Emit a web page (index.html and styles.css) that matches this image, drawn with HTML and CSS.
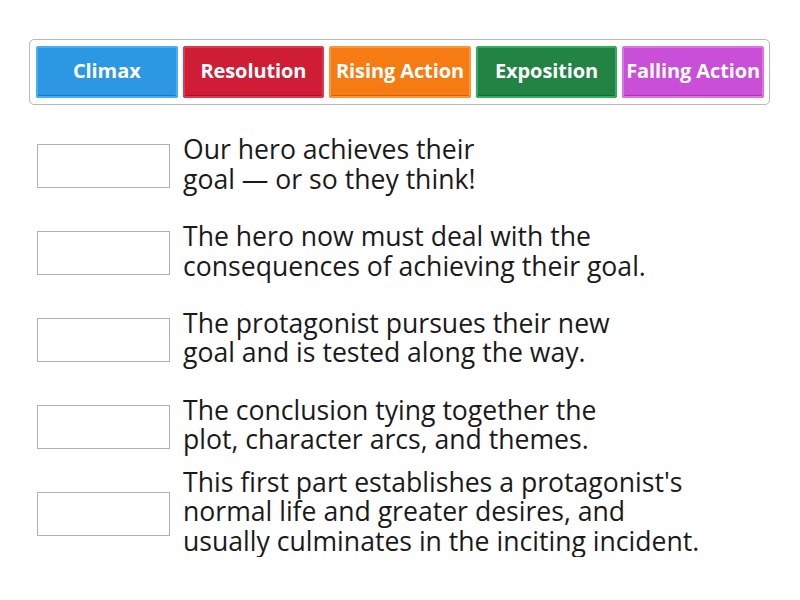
FILE: index.html
```html
<!DOCTYPE html>
<html>
<head>
<meta charset="utf-8">
<link rel="stylesheet" href="styles.css">
</head>
<body>
<div class="page">
  <div class="bank">
    <div class="tile blue">Climax</div>
    <div class="tile red">Resolution</div>
    <div class="tile orange">Rising Action</div>
    <div class="tile green">Exposition</div>
    <div class="tile purple">Falling Action</div>
  </div>
  <div class="rows">
    <div class="row"><div class="slot"></div><div class="text">Our hero achieves their<br>goal — or so they think!</div></div>
    <div class="row"><div class="slot"></div><div class="text">The hero now must deal with the<br>consequences of achieving their goal.</div></div>
    <div class="row"><div class="slot"></div><div class="text">The protagonist pursues their new<br>goal and is tested along the way.</div></div>
    <div class="row"><div class="slot"></div><div class="text">The conclusion tying together the<br>plot, character arcs, and themes.</div></div>
    <div class="row"><div class="slot"></div><div class="text">This first part establishes a protagonist's<br>normal life and greater desires, and<br>usually culminates in the inciting incident.</div></div>
  </div>
</div>
</body>
</html>
```
FILE: styles.css
```css
html, body {
  margin: 0;
  padding: 0;
  background: #fff;
}
body {
  font-family: "Open Sans", "Liberation Sans", sans-serif;
  color: #1a1a1a;
}
.page {
  padding: 39px 30px 0 29px;
}
.bank {
  display: flex;
  gap: 5px;
  border: 1px solid #b8b8b8;
  border-radius: 5px;
  padding: 6px 5px 6px 6px;
  height: 52px;
}
.tile {
  flex: 1 1 0;
  display: flex;
  align-items: center;
  justify-content: center;
  border-radius: 3px;
  color: #fff;
  font-weight: 700;
  font-size: 20px;
  padding-bottom: 4px;
  box-sizing: border-box;
  white-space: nowrap;
  letter-spacing: -0.1px;
}
.blue {
  background: #2c97e2;
  box-shadow: inset 0 0 0 2px #4aaef0, inset 0 -3px 0 #1a78c4;
}
.red {
  background: #cf1d35;
  box-shadow: inset 0 0 0 2px #dd3a50, inset 0 -3px 0 #a8122a;
}
.orange {
  background: #f57b12;
  box-shadow: inset 0 0 0 2px #fb973a, inset 0 -3px 0 #d4620a;
}
.green {
  background: #218444;
  box-shadow: inset 0 0 0 2px #2fb05c, inset 0 -3px 0 #176a35;
}
.purple {
  background: #c94ed8;
  box-shadow: inset 0 0 0 2px #d976e4, inset 0 -3px 0 #a835b8;
}
.rows {
  margin-top: 18px;
  padding-left: 8px;
}
.row {
  display: flex;
  align-items: center;
  height: 86.8px;
}
.slot {
  width: 131px;
  height: 42px;
  border: 1px solid #b0b0b0;
  flex: none;
}
.text {
  margin-left: 13px;
  padding-bottom: 3px;
  font-size: 26.6px;
  line-height: 29.5px;
  color: #1a1a1a;
}
```
